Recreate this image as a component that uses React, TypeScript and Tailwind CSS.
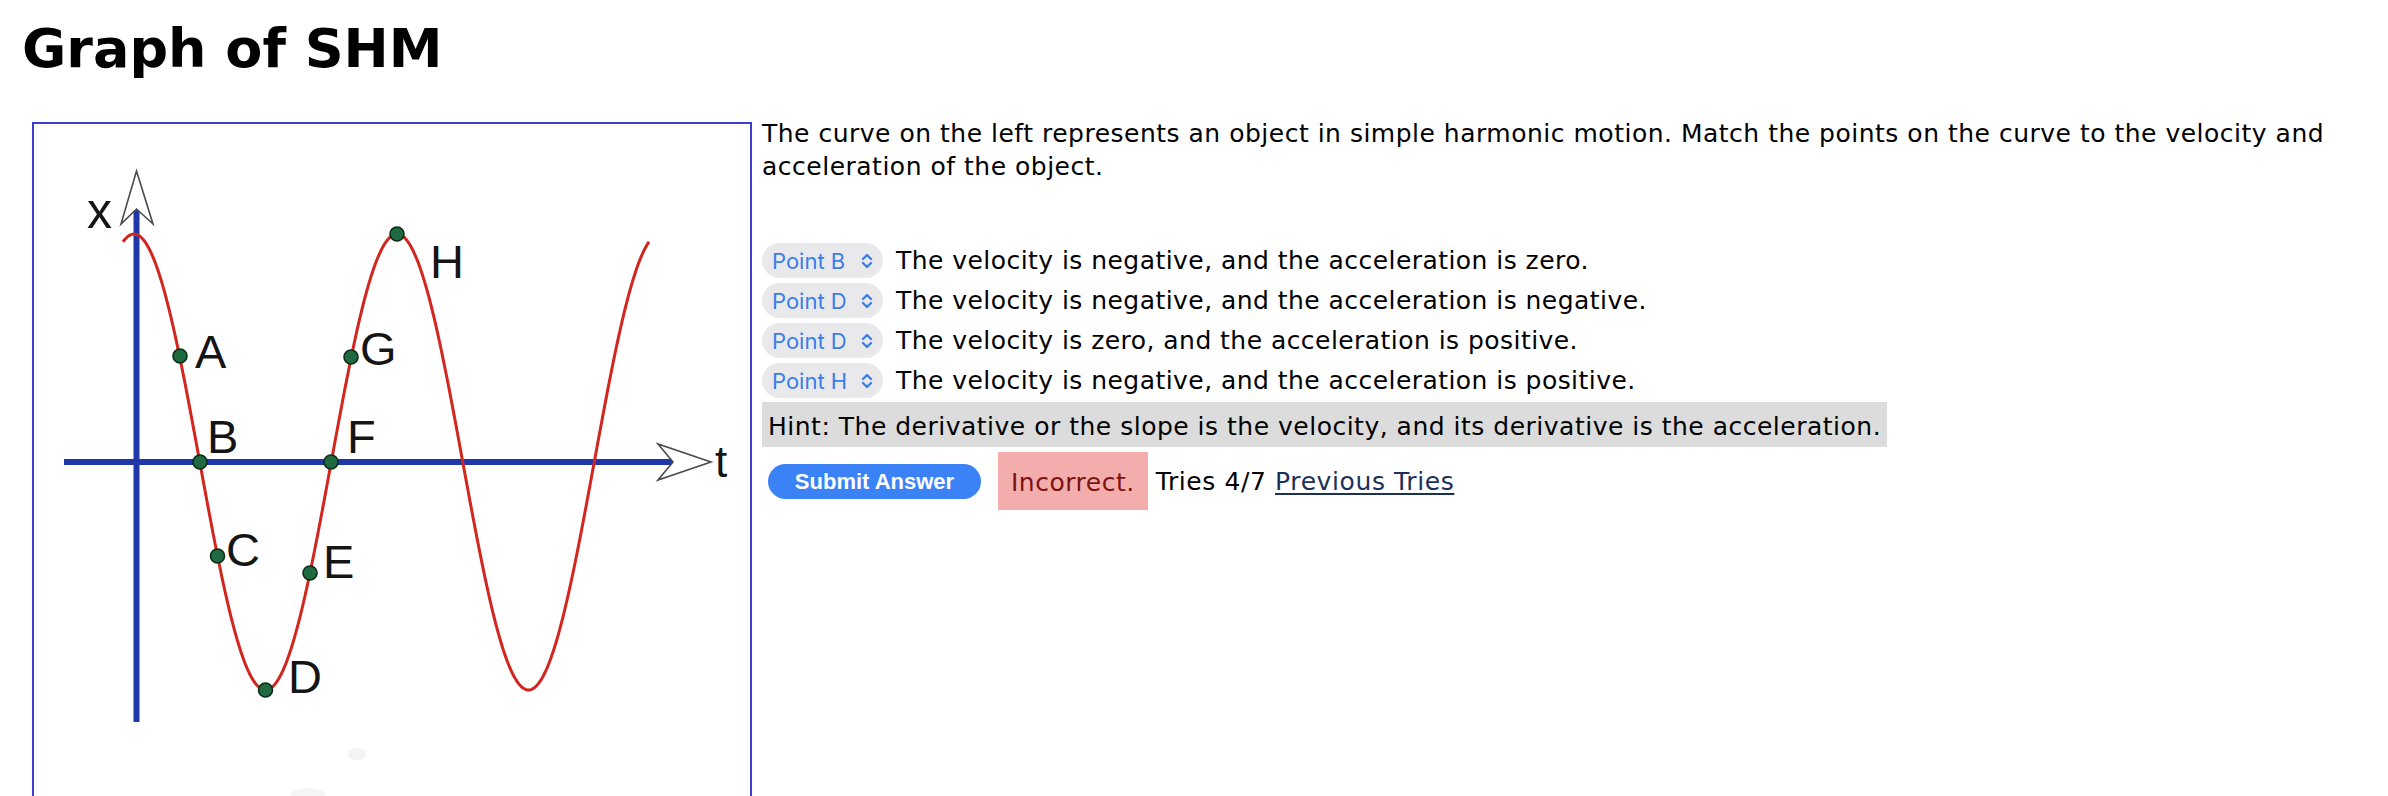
import React from "react";

const X0 = 134;
const P = 263;
const CY = 462;
const AMP = 228;

function curvePath(): string {
  const pts: string[] = [];
  for (let x = 123; x <= 649; x += 2) {
    const y = CY - AMP * Math.cos((2 * Math.PI * (x - X0)) / P);
    pts.push(`${x === 123 ? "M" : "L"}${x.toFixed(1)} ${y.toFixed(1)}`);
  }
  return pts.join(" ");
}

const dots: [number, number][] = [
  [180, 356],
  [200, 462],
  [217.5, 556],
  [265.5, 690],
  [310, 573],
  [331, 462],
  [351, 357],
  [397, 234],
];

const labels: [string, number, number][] = [
  ["A", 195, 368],
  ["B", 207, 453],
  ["C", 226, 566],
  ["D", 288, 693],
  ["E", 323, 578],
  ["F", 347, 453],
  ["G", 360, 365],
  ["H", 430, 278],
];

function Graph() {
  return (
    <div className="mt-[5px] w-[720px] h-[720px] shrink-0 border-2 border-[#3d3dd0] bg-white">
      <svg width="716" height="716" viewBox="34 124 716 716" className="block">
        <ellipse cx="357" cy="754" rx="9" ry="6" fill="#f4f4f4" />
        <ellipse cx="308" cy="796" rx="18" ry="8" fill="#f5f5f5" />
        <line x1="136.5" y1="722" x2="136.5" y2="205" stroke="#1f37a8" strokeWidth="6" />
        <line x1="64" y1="462" x2="676" y2="462" stroke="#1f37a8" strokeWidth="6" />
        <polygon
          points="136.5,171 153,224 136.5,209 121,224"
          fill="#ffffff"
          stroke="#4a4a4a"
          strokeWidth="1.6"
        />
        <polygon
          points="711,462 658,444 673,462 658,480"
          fill="#ffffff"
          stroke="#4a4a4a"
          strokeWidth="1.6"
        />
        <path d={curvePath()} fill="none" stroke="#d2261f" strokeWidth="3" strokeLinejoin="round" />
        {dots.map(([x, y], i) => (
          <circle key={i} cx={x} cy={y} r="7" fill="#1f6a40" stroke="#0c2b19" strokeWidth="1.6" />
        ))}
        <g fontFamily="'Liberation Sans', Arial, sans-serif" fontSize="47" fill="#151515">
          {labels.map(([t, x, y]) => (
            <text key={t} x={x} y={y}>
              {t}
            </text>
          ))}
          <text x="87" y="228" fontSize="50">x</text>
          <text x="715" y="477" fontSize="44">t</text>
        </g>
      </svg>
    </div>
  );
}

function Chevrons() {
  return (
    <svg width="14" height="20" viewBox="0 0 14 20" fill="none" className="shrink-0">
      <path d="M3 8 L7 4 L11 8" stroke="#3b7de9" strokeWidth="2.4" strokeLinecap="round" strokeLinejoin="round" />
      <path d="M3 12 L7 16 L11 12" stroke="#3b7de9" strokeWidth="2.4" strokeLinecap="round" strokeLinejoin="round" />
    </svg>
  );
}

const rows: [string, string][] = [
  ["Point B", "The velocity is negative, and the acceleration is zero."],
  ["Point D", "The velocity is negative, and the acceleration is negative."],
  ["Point D", "The velocity is zero, and the acceleration is positive."],
  ["Point H", "The velocity is negative, and the acceleration is positive."],
];

export default function App() {
  return (
    <div className="min-h-screen bg-white text-black font-['DejaVu_Sans',sans-serif]">
      <h1 className="pl-[22px] pt-[17px] mb-[37px] text-[54px] leading-[63px] font-bold">Graph of SHM</h1>
      <div className="flex pl-[32px]">
        <Graph />
        <div className="ml-[10px] flex-1 min-w-0 pr-[8px]">
          <p className="text-[25px] leading-[33px] tracking-[0.5px]">
            The curve on the left represents an object in simple harmonic motion. Match the points on the curve to the
            velocity and acceleration of the object.
          </p>
          <div className="mt-[60px] flex flex-col gap-[5px]">
            {rows.map(([p, t], i) => (
              <div key={i} className="flex items-center h-[35px]">
                <div className="w-[121px] h-[35px] rounded-full bg-[#e9e9ec] flex items-center justify-between pl-[10px] pr-[9px]">
                  <span className="font-['Inter',sans-serif] text-[22px] text-[#3b7de9] leading-none">{p}</span>
                  <Chevrons />
                </div>
                <span className="ml-[13px] text-[25px] leading-[35px] tracking-[0.45px] whitespace-nowrap">{t}</span>
              </div>
            ))}
          </div>
          <div className="mt-[4px] w-fit bg-[#dcdcdc] px-[6px] pt-[8px] pb-[4px] text-[25px] leading-[33px] tracking-[0.5px] whitespace-nowrap">
            Hint: The derivative or the slope is the velocity, and its derivative is the acceleration.
          </div>
          <div className="mt-[5px] flex items-center">
            <button className="ml-[6px] w-[213px] h-[35px] rounded-full bg-[#3b82f6] text-white font-bold text-[22px] font-['Liberation_Sans',Arial,sans-serif] flex items-center justify-center">
              Submit Answer
            </button>
            <div className="ml-[17px] bg-[#f3adac] text-[#7d1212] px-[13px] pt-[14px] pb-[11px] text-[25px] leading-[33px] tracking-[0.5px]">
              Incorrect.
            </div>
            <span className="ml-[8px] text-[25px] leading-[33px] tracking-[0.6px] whitespace-nowrap">
              Tries 4/7{" "}
              <a href="#" className="text-[#1c3157] underline underline-offset-[3px]">
                Previous Tries
              </a>
            </span>
          </div>
        </div>
      </div>
    </div>
  );
}
